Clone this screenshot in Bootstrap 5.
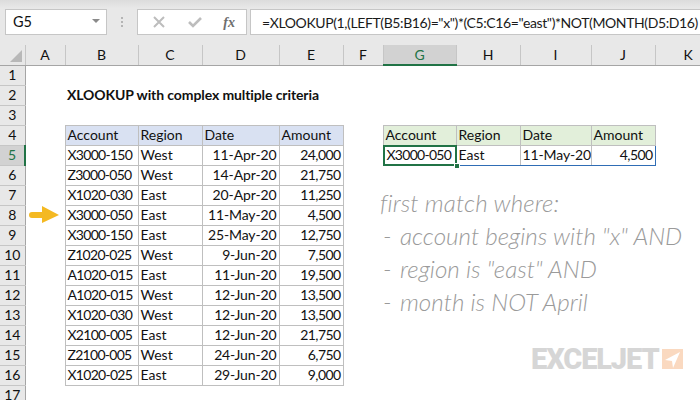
<!DOCTYPE html>
<html lang="en">
<head>
<meta charset="utf-8">
<title>XLOOKUP with complex multiple criteria</title>
<link href="https://cdn.jsdelivr.net/npm/bootstrap@5.3.0/dist/css/bootstrap.min.css" rel="stylesheet">
<style>
html,body{width:700px;height:400px;overflow:hidden;margin:0;background:#fff;}
body{font-family:"Lato","Liberation Sans",sans-serif;font-size:14px;color:#111;position:relative;}
.xl-top{height:45px;width:700px;background:linear-gradient(#dcdcdc 0,#e8e8e8 8px,#e8e8e8 100%);padding:9px 0 0 5px;}
.xl-box{height:26px;background:#fff;border:1px solid #c6c6c6;flex:0 0 auto;}
.xl-name{width:102px;padding:0 7px;font-size:14.5px;}
.xl-caret{width:0;height:0;border-left:4px solid transparent;border-right:4px solid transparent;border-top:4px solid #8a8a8a;margin-right:-1px;margin-top:-3px;}
.xl-dots{width:30px;height:26px;gap:2px;flex:0 0 auto;}
.xl-dots i{width:2px;height:2px;background:#b4b4b4;display:block;}
.xl-btns{width:110px;padding:0 11px 0 14px;}
.xl-fx{font-family:"Liberation Serif",serif;font-style:italic;font-weight:700;font-size:14px;color:#6e6e6e;}
.xl-formula{flex:1 1 0;min-width:0;margin-left:3px;border-right:0;padding:0 0 0 11px;font-size:14px;letter-spacing:-.39px;white-space:nowrap;overflow:hidden;color:#1a1a1a;}
table.xl-sheet{table-layout:fixed;width:721px;border-collapse:collapse;}
.xl-sheet td,.xl-sheet th{height:20px;padding:0 2px;line-height:18px;font-weight:400;white-space:nowrap;overflow:hidden;}
.xl-sheet thead th{background:#e8e8e8;border-right:1px solid #c6c6c6;border-bottom:1px solid #a5a5a5;text-align:center;}
.xl-sheet thead th.xl-k{border-right:0;}
.xl-sheet tbody th{background:#e8e8e8;border-bottom:1px solid #c6c6c6;border-right:1px solid #a5a5a5;text-align:center;padding:0;}
.xl-corner{position:relative;}
.xl-corner::after{content:"";position:absolute;right:3px;bottom:3px;border-style:solid;border-width:0 0 12px 12px;border-color:transparent transparent #b8b8b8 transparent;}
.xl-sheet thead th.xl-colsel{background:#d2d2d2;color:#217346;border-bottom:2px solid #217346;}
.xl-sheet tbody th.xl-rowsel{background:#d2d2d2;color:#217346;border-right:2px solid #217346;}
.xl-sheet td.xl-cell{border:1px solid #bfbfbf;}
.xl-blue{background:#d9e1f2;}
.xl-green{background:#e2efda;}
.xl-sheet td.xl-id{letter-spacing:-.72px;}
.xl-sheet td.xl-date{text-align:right;letter-spacing:-.12px;}
.xl-sheet td.xl-amt{text-align:right;letter-spacing:-.6px;}
.xl-sheet td.xl-cell.xl-hit{border-top:1px solid #2f6db5;border-bottom:1px solid #2f6db5;}
.xl-sheet td.xl-cell.xl-end{border-right:1px solid #2f6db5;}
.xl-sheet td.xl-title{font-weight:700;overflow:visible;letter-spacing:-.1px;}
.xl-sheet td.xl-active{position:relative;overflow:visible;padding-left:3px;}
.xl-active::before{content:"";position:absolute;left:-1px;top:-1px;right:-1px;bottom:-1px;border:2px solid #217346;}
.xl-active::after{content:"";position:absolute;right:-4px;bottom:-4px;width:6px;height:6px;background:#217346;border:1px solid #fff;}
.xl-arrow{position:absolute;left:29px;top:206px;}
.xl-notes{position:absolute;left:380px;top:186px;font-family:"Lato",sans-serif;font-style:italic;font-weight:300;font-size:24.2px;line-height:33px;color:#9a9a9a;white-space:nowrap;}
.xl-first{letter-spacing:.1px;}
.xl-in{padding-left:3px;}
.xl-dash{display:inline-block;width:17px;}
.xl-logo{position:absolute;left:531px;top:341px;gap:3px;}
.xl-word{font-family:"Roboto","Liberation Sans",sans-serif;font-weight:900;font-size:29px;line-height:36px;letter-spacing:-1.1px;color:#d6d6d6;}
</style>
</head>
<body>
<div class="xl-top d-flex align-items-start">
  <div class="xl-box xl-name d-flex align-items-center justify-content-between"><span>G5</span><span class="xl-caret"></span></div>
  <div class="xl-dots d-flex flex-column align-items-center justify-content-center"><i></i><i></i><i></i></div>
  <div class="xl-box xl-btns d-flex align-items-center justify-content-between">
    <svg width="14" height="14" viewBox="0 0 14 14"><path d="M2 2 12 12M12 2 2 12" stroke="#bdbdbd" stroke-width="2" fill="none"/></svg>
    <svg width="16" height="14" viewBox="0 0 16 14"><path d="M2 7 6 11 14 3" stroke="#bdbdbd" stroke-width="2.6" fill="none"/></svg>
    <span class="xl-fx">fx</span>
  </div>
  <div class="xl-box xl-formula d-flex align-items-center"><span>=XLOOKUP(1,(LEFT(B5:B16)="x")*(C5:C16="east")*NOT(MONTH(D5:D16)</span></div>
</div>
<table class="xl-sheet">
<colgroup><col style="width:25px"><col style="width:40px"><col style="width:73px"><col style="width:64px"><col style="width:77px"><col style="width:64px"><col style="width:40px"><col style="width:73px"><col style="width:64px"><col style="width:71px"><col style="width:64px"><col style="width:66px"></colgroup>
<thead><tr><th class="xl-corner"></th><th>A</th><th>B</th><th>C</th><th>D</th><th>E</th><th>F</th><th class="xl-colsel">G</th><th>H</th><th>I</th><th>J</th><th class="xl-k">K</th></tr></thead>
<tbody>
<tr><th>1</th><td colspan="11"></td></tr>
<tr><th>2</th><td></td><td class="xl-title" colspan="10">XLOOKUP with complex multiple criteria</td></tr>
<tr><th>3</th><td colspan="11"></td></tr>
<tr><th>4</th><td></td><td class="xl-cell xl-blue">Account</td><td class="xl-cell xl-blue">Region</td><td class="xl-cell xl-blue">Date</td><td class="xl-cell xl-blue">Amount</td><td></td><td class="xl-cell xl-green">Account</td><td class="xl-cell xl-green">Region</td><td class="xl-cell xl-green">Date</td><td class="xl-cell xl-green">Amount</td><td></td></tr>
<tr><th class="xl-rowsel">5</th><td></td><td class="xl-cell xl-id">X3000-150</td><td class="xl-cell">West</td><td class="xl-cell xl-date">11-Apr-20</td><td class="xl-cell xl-amt">24,000</td><td></td><td class="xl-cell xl-id xl-active">X3000-050</td><td class="xl-cell xl-hit">East</td><td class="xl-cell xl-hit xl-date">11-May-20</td><td class="xl-cell xl-hit xl-end xl-amt">4,500</td><td></td></tr>
<tr><th>6</th><td></td><td class="xl-cell xl-id">Z3000-050</td><td class="xl-cell">West</td><td class="xl-cell xl-date">14-Apr-20</td><td class="xl-cell xl-amt">21,750</td><td colspan="6"></td></tr>
<tr><th>7</th><td></td><td class="xl-cell xl-id">X1020-030</td><td class="xl-cell">East</td><td class="xl-cell xl-date">20-Apr-20</td><td class="xl-cell xl-amt">11,250</td><td colspan="6"></td></tr>
<tr><th>8</th><td></td><td class="xl-cell xl-id">X3000-050</td><td class="xl-cell">East</td><td class="xl-cell xl-date">11-May-20</td><td class="xl-cell xl-amt">4,500</td><td colspan="6"></td></tr>
<tr><th>9</th><td></td><td class="xl-cell xl-id">X3000-150</td><td class="xl-cell">East</td><td class="xl-cell xl-date">25-May-20</td><td class="xl-cell xl-amt">12,750</td><td colspan="6"></td></tr>
<tr><th>10</th><td></td><td class="xl-cell xl-id">Z1020-025</td><td class="xl-cell">West</td><td class="xl-cell xl-date">9-Jun-20</td><td class="xl-cell xl-amt">7,500</td><td colspan="6"></td></tr>
<tr><th>11</th><td></td><td class="xl-cell xl-id">A1020-015</td><td class="xl-cell">East</td><td class="xl-cell xl-date">11-Jun-20</td><td class="xl-cell xl-amt">19,500</td><td colspan="6"></td></tr>
<tr><th>12</th><td></td><td class="xl-cell xl-id">A1020-015</td><td class="xl-cell">West</td><td class="xl-cell xl-date">12-Jun-20</td><td class="xl-cell xl-amt">13,500</td><td colspan="6"></td></tr>
<tr><th>13</th><td></td><td class="xl-cell xl-id">X1020-030</td><td class="xl-cell">West</td><td class="xl-cell xl-date">12-Jun-20</td><td class="xl-cell xl-amt">13,500</td><td colspan="6"></td></tr>
<tr><th>14</th><td></td><td class="xl-cell xl-id">X2100-005</td><td class="xl-cell">East</td><td class="xl-cell xl-date">12-Jun-20</td><td class="xl-cell xl-amt">21,750</td><td colspan="6"></td></tr>
<tr><th>15</th><td></td><td class="xl-cell xl-id">Z2100-005</td><td class="xl-cell">West</td><td class="xl-cell xl-date">24-Jun-20</td><td class="xl-cell xl-amt">6,750</td><td colspan="6"></td></tr>
<tr><th>16</th><td></td><td class="xl-cell xl-id">X1020-025</td><td class="xl-cell">East</td><td class="xl-cell xl-date">29-Jun-20</td><td class="xl-cell xl-amt">9,000</td><td colspan="6"></td></tr>
<tr><th>17</th><td colspan="11"></td></tr>
</tbody>
</table>
<svg class="xl-arrow" width="31" height="18" viewBox="0 0 31 18"><path d="M3 6H13V0L30 9 13 17V12H3A3 3 0 0 1 3 6Z" fill="#f4b922"/></svg>
<div class="xl-notes">
  <div class="xl-first">first match where:</div>
  <div class="xl-in"><span class="xl-dash">-</span>account begins with "x" AND</div>
  <div class="xl-in"><span class="xl-dash">-</span>region is "east" AND</div>
  <div class="xl-in"><span class="xl-dash">-</span>month is NOT April</div>
</div>
<div class="xl-logo d-flex align-items-center">
  <span class="xl-word">EXCELJET</span>
  <svg width="21" height="20" viewBox="0 0 21 20"><rect width="21" height="20" fill="#fad9c0"/><path d="M3 11 18 3 11 19 10 12Z" fill="#fff"/></svg>
</div>
</body>
</html>
